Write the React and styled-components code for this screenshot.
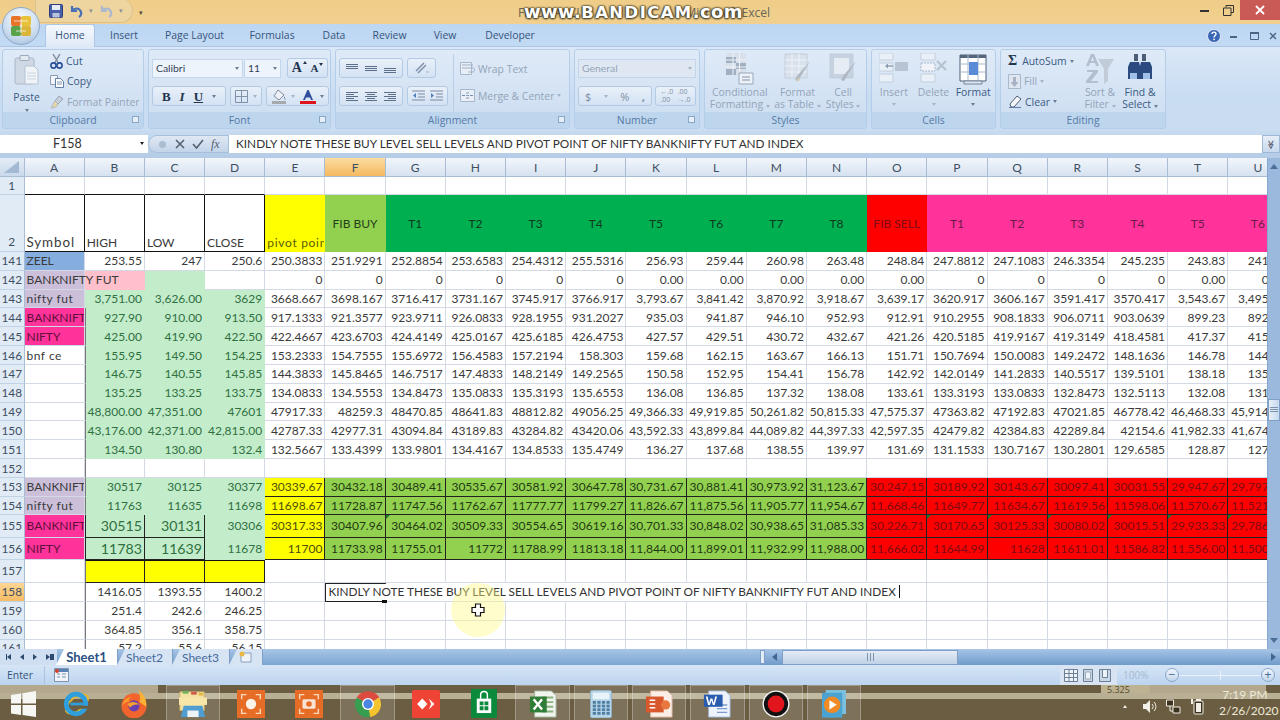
import React from "react";
import styled, { createGlobalStyle, css } from "styled-components";

const GlobalStyle = createGlobalStyle`
  html, body { margin: 0; padding: 0; background: #fff; }
  body { font-family: "Open Sans", "Liberation Sans", sans-serif; }
  * { box-sizing: border-box; }
`;

const Window = styled.div`
  position: relative;
  width: 1280px;
  height: 720px;
  overflow: hidden;
  display: flex;
  flex-direction: column;
`;

/* title bar */
const TitleBar = styled.div`
  position: relative;
  flex: 0 0 24px;
  display: flex;
  align-items: center;
  padding-left: 35px;
  background: linear-gradient(#efcd88, #f1d08f);
`;
const QuickAccess = styled.div`
  width: 98px;
  height: 24px;
  margin-top: -2px;
  padding-left: 13px;
  display: flex;
  align-items: center;
  gap: 6px;
  border: 1px solid #dcc08e;
  border-top: 0;
  border-radius: 0 14px 14px 0;
  background: #eed49e;
`;
const Tiny = styled.span`
  font-size: 7px;
  color: ${(p) => p.$color || "#8a8f99"};
  margin-left: ${(p) => p.$ml || 0}px;
  line-height: 1;
`;
const DocTitle = styled.div`
  position: absolute;
  left: 518px;
  top: 4px;
  width: 252px;
  display: flex;
  justify-content: space-between;
  font-size: 12px;
  color: #6a6658;
`;
const Watermark = styled.div`
  position: absolute;
  left: 524px;
  top: 1px;
  display: flex;
  align-items: baseline;
  font-family: "DejaVu Sans", sans-serif;
  font-weight: 700;
  color: #fff;
  text-shadow: 0 0 2px #4a4128, 0 1px 2px #4a4128, 1px 0 2px #4a4128, -1px 0 2px #4a4128;
`;
const WmSmall = styled.span`
  font-size: 18px;
  letter-spacing: 0.4px;
`;
const WmBig = styled.span`
  font-size: 16.5px;
  letter-spacing: 1.4px;
`;
const WinControls = styled.div`
  margin-left: auto;
  height: 20px;
  align-self: flex-start;
  display: flex;
  align-items: center;
`;
const WinBtn = styled.div`
  width: ${(p) => p.$w}px;
  height: 20px;
  display: flex;
  align-items: center;
  justify-content: center;
  background: ${(p) => p.$bg || "transparent"};
`;
const OfficeButton = styled.div`
  position: absolute;
  left: 2px;
  top: 7px;
  width: 38px;
  height: 38px;
  border-radius: 50%;
  display: flex;
  align-items: center;
  justify-content: center;
  background: radial-gradient(circle at 50% 30%, #f6f9fd 0%, #cfdff1 55%, #9db9d9 100%);
  border: 1px solid #8ea9c7;
  z-index: 3;
`;

/* tabs */
const TabStrip = styled.div`
  flex: 0 0 22px;
  display: flex;
  align-items: flex-end;
  padding-left: 45px;
  background: linear-gradient(#bcd6f3, #c3daf3);
  border-bottom: 1px solid #a9c6e6;
`;
const Tab = styled.div`
  height: ${(p) => (p.$active ? "23px" : "20px")};
  width: ${(p) => p.$w}px;
  display: flex;
  align-items: center;
  justify-content: center;
  padding-bottom: 2px;
  font-size: 10.4px;
  color: #35557d;
  ${(p) =>
    p.$active &&
    css`
      margin-bottom: -1px;
      background: linear-gradient(#f4f8fd, #dfeaf7);
      border: 1px solid #a9c6e6;
      border-bottom: 0;
      border-radius: 3px 3px 0 0;
    `}
`;
const TabTools = styled.div`
  margin-left: auto;
  height: 20px;
  display: flex;
  align-items: center;
`;

/* ribbon */
const Ribbon = styled.div`
  flex: 0 0 84px;
  display: flex;
  align-items: flex-start;
  gap: 4px;
  padding: 2px 0 0 2px;
  background: linear-gradient(#dbe8f7, #c8dcf2 60%, #c9dcf1);
`;
const Group = styled.div`
  width: ${(p) => p.$w}px;
  height: 80px;
  display: flex;
  flex-direction: column;
  border: 1px solid #b4cde9;
  border-radius: 3px;
  background: linear-gradient(#dfeaf7, #cbddf1);
`;
const GroupBody = styled.div`
  flex: 1;
  display: flex;
  padding: ${(p) => p.$pad || "0 3px"};
  min-height: 0;
`;
const GroupLabel = styled.div`
  position: relative;
  flex: 0 0 16px;
  display: flex;
  align-items: center;
  justify-content: center;
  padding-bottom: 1px;
  font-size: 10.4px;
  color: #557aa5;
  background: #bed5ee;
`;
const Launcher = styled.span`
  position: absolute;
  right: 4px;
  top: 4px;
  width: 7px;
  height: 7px;
  border: 1px solid #8aa6c6;
  background: #e6eef8;
`;
const PasteCol = styled.div`
  width: 47px;
  display: flex;
  flex-direction: column;
  align-items: center;
  padding-top: 5px;
`;
const LargeText = styled.div`
  font-size: 10.4px;
  line-height: 12px;
  text-align: center;
  white-space: nowrap;
  color: ${(p) => (p.$off ? "#93a4b8" : "#3a5a82")};
`;
const SmallCol = styled.div`
  display: flex;
  flex-direction: column;
  padding-top: ${(p) => p.$top || 1}px;
  gap: ${(p) => p.$gap || 0}px;
  width: ${(p) => p.$w || "auto"};
`;
const SmallBtn = styled.div`
  height: 21px;
  display: flex;
  align-items: center;
  gap: 3px;
  font-size: 10.4px;
  white-space: nowrap;
  color: ${(p) => (p.$off ? "#93a4b8" : "#3a5a82")};
`;
const SumLabel = styled.span`
  margin-left: 2px;
`;
const ToolRows = styled.div`
  flex: ${(p) => (p.$fixed ? "none" : 1)};
  display: flex;
  flex-direction: column;
  gap: 8px;
  padding-top: 8px;
`;
const ToolRow = styled.div`
  display: flex;
  gap: ${(p) => p.$gap ?? 4}px;
  height: 20px;
  align-items: center;
`;
const ComboBox = styled.div`
  width: ${(p) => p.$w}px;
  height: 19px;
  display: flex;
  align-items: center;
  justify-content: space-between;
  padding: 0 3px;
  font-size: 10.4px;
  color: ${(p) => (p.$off ? "#93a4b8" : "#33425a")};
  background: ${(p) => (p.$off ? "#dfe8f2" : "#eef4fb")};
  border: 1px solid #c3d5ea;
  font-family: "Lato", sans-serif;
`;
const ToolBox = styled.div`
  width: ${(p) => p.$w}px;
  height: 20px;
  margin-left: ${(p) => p.$ml || 0}px;
  padding: ${(p) => (p.$spread ? "0 6px" : 0)};
  display: flex;
  align-items: center;
  justify-content: ${(p) => (p.$spread ? "space-between" : "space-evenly")};
  font-size: ${(p) => p.$font || 11}px;
  line-height: ${(p) => (p.$font ? "8px" : "normal")};
  color: ${(p) => p.$color || "#445a78"};
  border: 1px solid #b3cae4;
  border-radius: 3px;
  background: linear-gradient(#e9f0f9, #d3e2f3);
`;
const GlyphBtn = styled.span`
  font-family: "Liberation Serif", serif;
  font-weight: ${(p) => p.$weight || 700};
  font-style: ${(p) => (p.$italic ? "italic" : "normal")};
  font-size: ${(p) => p.$size || 13}px;
  text-decoration: ${(p) => (p.$under ? "underline" : "none")};
  color: ${(p) => p.$color || "#24344d"};
  line-height: 1;
`;
const SizeGlyph = styled.span`
  display: flex;
  align-items: flex-start;
  gap: 1px;
`;
const Caret = styled.span`
  display: inline-block;
  width: 0;
  height: 0;
  border-left: 2.5px solid transparent;
  border-right: 2.5px solid transparent;
  border-top: 3px solid ${(p) => p.$color || "#6d7f96"};
  margin: ${(p) => p.$m || "0"};
  transform: ${(p) => (p.$up ? "rotate(180deg)" : "none")};
`;
const Divider = styled.div`
  width: 1px;
  height: 62px;
  margin: 4px 6px 0 5px;
  background: #b9cfe7;
`;
const LargeBtn = styled.div`
  width: ${(p) => p.$w}px;
  display: flex;
  flex-direction: column;
  align-items: center;
  padding-top: 3px;
`;
const IconSlot = styled.div`
  height: ${(p) => p.$h || 33}px;
  display: flex;
  align-items: flex-start;
  justify-content: center;
`;

/* formula bar */
const FormulaBar = styled.div`
  flex: 0 0 27px;
  display: flex;
  padding: 4px 0 5px;
  background: linear-gradient(#c7daf0, #b4cce6);
`;
const NameBox = styled.div`
  width: 148px;
  display: flex;
  align-items: center;
  justify-content: space-between;
  padding: 0 4px 2px 53px;
  font-size: 12.5px;
  font-family: "Lato", sans-serif;
  color: #333;
  background: #fff;
`;
const FxPill = styled.div`
  width: 81px;
  display: flex;
  align-items: center;
  gap: 7px;
  padding-left: 10px;
  color: #55606e;
  background: linear-gradient(#dfe8f3, #c2d4e9);
  border: 1px solid #a8c0dc;
  border-radius: 10px 0 0 10px;
`;
const FxDot = styled.span`
  width: 7px;
  height: 7px;
  border-radius: 50%;
  background: #a9bcd2;
  margin-right: 2px;
`;
const FormulaInput = styled.div`
  flex: 1;
  display: flex;
  align-items: center;
  padding: 0 0 2px 7px;
  font-family: "Lato", sans-serif;
  font-size: 11.8px;
  color: #333;
  white-space: nowrap;
  background: #fff;
`;
const FormulaExpand = styled.div`
  width: 18px;
  display: flex;
  align-items: center;
  justify-content: center;
  font-size: 9px;
  color: #445;
  background: linear-gradient(#e6eef8, #c8d9ed);
  border: 1px solid #9fb8d6;
  span {
    transform: rotate(90deg);
  }
`;

/* sheet */
const SheetArea = styled.div`
  position: relative;
  flex: 0 0 491px;
  display: flex;
`;
const GridClip = styled.div`
  flex: 0 0 1267px;
  overflow: hidden;
  font-family: "Lato", sans-serif;
  font-size: 12px;
  color: #3a3a3a;
  background: #fff;
`;
const Row = styled.div`
  display: grid;
  grid-template-columns: 24.5px repeat(21, 60.2px);
  height: ${(p) => p.$h}px;
`;
const ColHead = styled.div`
  display: flex;
  align-items: center;
  justify-content: center;
  font-size: 12px;
  color: #3f4f63;
  border-right: 1px solid #a9bcd3;
  border-bottom: 1px solid #a9bcd3;
  background: ${(p) =>
    p.$active
      ? "linear-gradient(#fbdca0, #f6b95e)"
      : "linear-gradient(#f2f6fb, #d6e2f0)"};
`;
const CornerHead = styled(ColHead)`
  padding: 3px;
  background: linear-gradient(#e4ecf6, #c9d9ec);
`;
const RowHead = styled.div`
  display: flex;
  align-items: ${(p) => (p.$tall ? "flex-end" : "center")};
  justify-content: center;
  padding-bottom: ${(p) => (p.$tall ? "2px" : 0)};
  font-size: 11.8px;
  color: #3f4f63;
  border-right: 1px solid #a9bcd3;
  border-bottom: 1px solid #c3d3e6;
  background: ${(p) => (p.$active ? "linear-gradient(#fbd795, #f6bc65)" : "#e1ebf6")};
`;
const Cell = styled.div`
  position: relative;
  display: flex;
  align-items: ${(p) => (p.$bottom ? "flex-end" : "center")};
  justify-content: ${(p) =>
    p.$align === "left" ? "flex-start" : p.$align === "center" ? "center" : "flex-end"};
  padding: ${(p) => (p.$bottom ? "0 2px 1px" : "0 2px")};
  white-space: nowrap;
  overflow: ${(p) => (p.$spill ? "visible" : "hidden")};
  z-index: ${(p) => (p.$spill ? 1 : 0)};
  font-size: ${(p) => p.$size || 12}px;
  letter-spacing: ${(p) => p.$ls || 0}px;
  color: ${(p) => p.$color || "#3a3a3a"};
  background: ${(p) => p.$fill || "#fff"};
  grid-column: ${(p) => (p.$span ? `span ${p.$span}` : "auto")};
  border-right: 1px solid ${(p) => p.$edge || "#d3dae6"};
  border-bottom: 1px solid ${(p) => p.$floor || p.$edge || "#d3dae6"};
  border-top: ${(p) => (p.$top ? "1px solid #111" : "0")};
  border-left: ${(p) => (p.$lead ? `1px solid ${p.$lead}` : "0")};
  ${(p) =>
    p.$tick &&
    css`
      &::before {
        content: "";
        position: absolute;
        left: 0;
        top: 0;
        border-top: 4px solid #1f7a2d;
        border-right: 4px solid transparent;
      }
    `}
`;
const ActiveCell = styled.div`
  position: absolute;
  left: 0;
  top: 0;
  width: 61px;
  height: 19px;
  border: 1.5px solid #222;
  border-right: 0;
`;
const FillHandle = styled.span`
  position: absolute;
  left: 57px;
  top: 17px;
  width: 5px;
  height: 3px;
  background: #111;
`;
const EditText = styled.span`
  padding-left: 1px;
  font-size: 11.8px;
  color: #333;
`;
const Caretbar = styled.span`
  display: inline-block;
  width: 1px;
  height: 13px;
  margin-left: 3px;
  background: #111;
  vertical-align: -2px;
`;
const VScroll = styled.div`
  flex: 1;
  display: flex;
  flex-direction: column;
  align-items: stretch;
  background: #9ab9dc;
  border-left: 1px solid #86a8cf;
`;
const ScrollEnd = styled.div`
  height: 17px;
  display: flex;
  align-items: center;
  justify-content: center;
  margin-top: ${(p) => (p.$low ? "auto" : 0)};
`;
const Arrow = styled.span`
  width: 0;
  height: 0;
  border-left: 4px solid transparent;
  border-right: 4px solid transparent;
  ${(p) => (p.$down ? "border-top" : "border-bottom")}: 5px solid #4c6f99;
`;
const VThumb = styled.div`
  height: 22px;
  margin-top: 224px;
  display: flex;
  align-items: center;
  justify-content: center;
  background: linear-gradient(90deg, #e8f0f9, #c7d9ed);
  border: 1px solid #7f9fc6;
`;
const Highlight = styled.div`
  position: absolute;
  left: 451px;
  top: 425px;
  width: 54px;
  height: 54px;
  border-radius: 50%;
  display: flex;
  align-items: center;
  justify-content: center;
  background: rgba(255, 250, 130, 0.42);
  z-index: 5;
`;

/* sheet tabs row */
const SheetTabs = styled.div`
  flex: 0 0 16px;
  display: flex;
  align-items: stretch;
  background: linear-gradient(#a8c5e6, #6f9bcc);
`;
const TabNav = styled.div`
  width: 57px;
  display: flex;
  align-items: center;
  justify-content: space-around;
  padding: 0 3px;
  background: #cfdff1;
`;
const NavArrow = styled.span`
  width: 0;
  height: 0;
  border-top: 3px solid transparent;
  border-bottom: 3px solid transparent;
  ${(p) => (p.$right ? "border-left" : "border-right")}: 4px solid #2d4a6e;
  ${(p) =>
    p.$stop &&
    css`
      outline: 0;
      box-shadow: ${p.$right ? "4px" : "-1px"} 0 0 0 #2d4a6e;
    `}
`;
const SheetTab = styled.div`
  width: ${(p) => p.$w}px;
  margin-left: -1px;
  display: flex;
  align-items: center;
  justify-content: center;
  font-family: "Lato", sans-serif;
  font-size: ${(p) => (p.$active ? 13 : 12)}px;
  font-weight: ${(p) => (p.$active ? 700 : 400)};
  color: ${(p) => (p.$active ? "#2a5186" : "#47699a")};
  background: ${(p) => (p.$active ? "#fff" : "#d6e4f4")};
  clip-path: polygon(8px 0, 100% 0, 100% 100%, 0 100%);
  border-right: 1px solid #7f9fc6;
`;
const TabsGap = styled.div`
  flex: 0 0 497px;
  background: linear-gradient(#a8c5e6, #7ca5d3);
`;
const HScroll = styled.div`
  flex: 1;
  display: flex;
  align-items: center;
`;
const Splitter = styled.span`
  width: 5px;
  height: 14px;
  margin-right: 7px;
  background: #e3edf8;
  border: 1px solid #7f9fc6;
`;
const ArrowSide = styled.span`
  width: 0;
  height: 0;
  border-top: 4px solid transparent;
  border-bottom: 4px solid transparent;
  ${(p) => (p.$right ? "border-left" : "border-right")}: 5px solid #43668f;
  ${(p) => (p.$right ? "margin: 0 4px 0 auto" : "margin-right: 5px")};
`;
const HThumb = styled.div`
  width: 176px;
  height: 15px;
  display: flex;
  align-items: center;
  justify-content: center;
  background: linear-gradient(#e4ecf6, #bfd1e6);
  border: 1px solid #7f9fc6;
`;

/* status bar */
const StatusBar = styled.div`
  flex: 0 0 20px;
  display: flex;
  align-items: center;
  padding-left: 7px;
  font-size: 10.4px;
  color: #35557d;
  background: linear-gradient(#d6e5f6, #bcd4ef);
`;
const StatusSep = styled.span`
  width: 1px;
  height: 18px;
  margin: 0 9px 0 11px;
  background: #a9c3e0;
`;
const ViewButtons = styled.div`
  margin-left: auto;
  height: 20px;
  display: flex;
  align-items: center;
  gap: 3px;
  padding: 0 4px;
  background: #d8e4f1;
  width: 57px;
`;
const ZoomArea = styled.div`
  width: 163px;
  display: flex;
  align-items: center;
  padding-left: 6px;
`;
const ZoomPct = styled.span`
  width: 42px;
  color: #a7bad0;
  font-size: 10px;
`;
const ZoomRound = styled.span`
  width: 14px;
  height: 14px;
  flex: none;
  border-radius: 50%;
  display: flex;
  align-items: center;
  justify-content: center;
  font-size: 12px;
  line-height: 1;
  color: #4b6a90;
  background: linear-gradient(#f1f6fc, #c2d5ea);
  border: 1px solid #89a7ca;
`;
const ZoomTrack = styled.span`
  position: relative;
  width: 82px;
  height: 1px;
  background: #e9f1fa;
  &::after {
    content: "";
    position: absolute;
    left: 50%;
    top: -4px;
    width: 1px;
    height: 9px;
    background: #e9f1fa;
  }
`;

/* taskbar */
const Taskbar = styled.div`
  position: relative;
  flex: 1;
  display: flex;
  align-items: stretch;
  background: linear-gradient(transparent 8px, #b9af95 8px, #b9af95 14px, transparent 14px), #6a5d41;
`;
const StripPiece = styled.div`
  position: absolute;
  top: 0;
  left: ${(p) => p.$l}px;
  width: ${(p) => p.$w}px;
  height: 8px;
  background: ${(p) => p.$bg};
  color: #554a30;
  font-size: 9px;
  line-height: 9px;
  overflow: hidden;
  padding-left: ${(p) => p.$pad || 0}px;
`;
const StartBtn = styled.div`
  position: relative;
  width: 47px;
  display: flex;
  align-items: center;
  justify-content: center;
  padding-top: 3px;
`;
const TaskItem = styled.div`
  position: relative;
  width: 58.3px;
  display: flex;
  align-items: center;
  justify-content: center;
  padding-top: 2px;
  ${(p) =>
    p.$open &&
    css`
      background: rgba(255, 255, 255, 0.13);
      border: 1px solid rgba(255, 255, 255, 0.28);
      border-bottom: 0;
      margin: 0 2px;
      width: 54.3px;
    `}
`;
const Tray = styled.div`
  position: relative;
  margin-left: auto;
  display: flex;
  align-items: center;
  gap: 9px;
  padding-top: 8px;
`;
const Clock = styled.div`
  width: 52px;
  margin: -8px 9px 0 6px;
  white-space: nowrap;
  text-align: center;
  font-size: 12px;
  line-height: 16px;
  color: #eee8d8;
  font-family: "Lato", sans-serif;
`;

/* drawn icons */
const PlainSvg = styled.svg`
  display: block;
  flex: none;
`;
const Svg = ({ w, h, children, vb, show }) => (
  <PlainSvg width={show || w} height={show ? (show * h) / w : h} viewBox={vb || `0 0 ${w} ${h}`}>
    {children}
  </PlainSvg>
);
const Lines = ({ ys, c = "#5b6f88" }) => (
  <Svg w={14} h={12}>
    {ys.map((l, i) => (
      <rect key={i} x={l[0]} y={l[1]} width={l[2]} height="1" fill={c} />
    ))}
  </Svg>
);
const Grip = ({ vertical }) =>
  vertical ? (
    <Svg w={8} h={6}><path d="M0 .5h8M0 2.500h8M0 4.500h8" stroke="#7b92ad" /></Svg>
  ) : (
    <Svg w={7} h={8}><path d="M.5 0v8M3.500 0v8M6.500 0v8" stroke="#7b92ad" /></Svg>
  );
const SaveIcon = () => (
  <Svg w={14} h={14}>
    <rect x="0.5" y="0.5" width="13" height="13" rx="1" fill="#4a5fa8" stroke="#2d3c7a" />
    <rect x="3" y="1" width="8" height="5" fill="#e6ecf7" />
    <rect x="3.5" y="9" width="7" height="4.5" fill="#b8c4dc" />
  </Svg>
);
const UndoIcon = ({ c }) => (
  <Svg w={14} h={14}>
    <path d="M3 2v5h5M3 7c2-3 7-4 9 1 .6 2-.4 4-2 5" fill="none" stroke={c} strokeWidth="2.2" />
  </Svg>
);
const OfficeLogo = () => (
  <Svg w={26} h={26}>
    <rect x="3" y="3" width="10" height="10" rx="2" fill="#e8742a" />
    <rect x="13" y="3" width="10" height="10" rx="2" fill="#e9c23b" />
    <rect x="3" y="13" width="10" height="10" rx="2" fill="#5ba34a" />
    <rect x="13" y="13" width="10" height="10" rx="2" fill="#d9b53a" />
    <path d="M6 8h14M8 18h10M13 6v14" stroke="#fff" strokeWidth="1.2" opacity=".7" />
  </Svg>
);
const ClipboardIcon = () => (
  <Svg w={25} h={31}>
    <rect x="1" y="3" width="19" height="26" rx="2" fill="#cfd9e6" stroke="#aab8c9" />
    <rect x="6" y="0.5" width="9" height="5" rx="1" fill="#e3e9f1" stroke="#9aa9bb" />
    <path d="M11 11h9l4 4v14H11z" fill="#f0f4f9" stroke="#b7c3d2" />
    <path d="M13 18h9M13 21h9M13 24h9" stroke="#cdd6e2" />
  </Svg>
);
const ScissorsIcon = () => (
  <Svg w={13} h={15}>
    <path d="M3 0l6 10M10 0L4 10" stroke="#7f8a9a" strokeWidth="1.4" fill="none" />
    <circle cx="3.5" cy="11.5" r="2.6" fill="none" stroke="#2c4f99" strokeWidth="1.6" />
    <circle cx="9.5" cy="11.5" r="2.6" fill="none" stroke="#2c4f99" strokeWidth="1.6" />
  </Svg>
);
const CopyIcon = () => (
  <Svg w={14} h={13}>
    <path d="M.5.5h7v9h-7z" fill="#f2f5fa" stroke="#8b9db5" />
    <path d="M5.5 3.5h5l3 3v6h-8z" fill="#fff" stroke="#5f7ea8" />
    <path d="M7 7h5M7 9h5" stroke="#7b96ba" />
  </Svg>
);
const BrushIcon = () => (
  <Svg w={14} h={14}>
    <path d="M9 1l4 3-5 5-3-3z" fill="#c7ced8" stroke="#9aa6b6" />
    <path d="M5 6l3 3c-1 3-4 4-7 4 2-2 2-5 4-7z" fill="#e6d9a6" stroke="#aeb6c2" />
  </Svg>
);
const BorderIcon = () => (
  <Svg w={13} h={13}>
    <path d="M.5.5h12v12H.5zM6.5.5v12M.5 6.5h12" fill="none" stroke="#7f92aa" />
  </Svg>
);
const BucketIcon = () => (
  <Svg w={16} h={15}>
    <path d="M7 1l6 5-5 5-5-4z" fill="#eef2f7" stroke="#7d8a9b" />
    <path d="M13 7c1 1.500 2 3 1 4-1-.5-1-3-1-4z" fill="#8090a5" />
    <rect x="1" y="12" width="14" height="3" fill="#a7a9ad" />
  </Svg>
);
const ColorA = () => (
  <Svg w={16} h={15}>
    <path d="M3 11L7.300 1h1.400L13 11h-2L10 8.500H6L5 11z" fill="#2e4f9c" />
    <rect x="0" y="12" width="16" height="3" fill="#e0141c" />
  </Svg>
);
const OrientIcon = () => (
  <Svg w={16} h={14}>
    <path d="M2 10l8-8M4 12l8-8" stroke="#7a8ba3" strokeWidth="1.4" />
    <path d="M12 11l3 0" stroke="#a5b4c7" />
  </Svg>
);
const IndentIcon = ({ flip }) => (
  <Svg w={13} h={12}>
    <path d="M0 1h13M6 4h7M6 7h7M0 10h13" stroke="#7a8ba3" />
    <path d={flip ? "M4 3v5L1 5.500z" : "M1 3v5l3-2.500z"} fill="#4f7fbd" />
  </Svg>
);
const WrapIcon = () => (
  <Svg w={15} h={13}>
    <path d="M.5.5h11v12H.5z" fill="#e9eff7" stroke="#a8b7ca" />
    <path d="M2 3h11M2 6h11c2 0 2 4 0 4H8" stroke="#9fb0c5" fill="none" />
  </Svg>
);
const MergeIcon = () => (
  <Svg w={15} h={13}>
    <path d="M.5.5h14v12H.5z" fill="#e9eff7" stroke="#a8b7ca" />
    <path d="M2 6.500h3M10 6.500h3" stroke="#6f8fb8" />
    <path d="M6 4h3M6 6.500h3M6 9h3" stroke="#8a9cb3" />
  </Svg>
);
const CondIcon = () => (
  <Svg w={28} h={32}>
    <path d="M0 0h20v22H0z" fill="#d7e0eb" />
    <path d="M0 4h10v6H0zM10 10h10v6H10zM0 16h10v6H0z" fill="#a0afc2" />
    <path d="M7 0v22M13.500 0v22M0 7h20M0 14h20" stroke="#eef2f7" />
    <path d="M13 20h14v11H13z" fill="#eef2f7" stroke="#97a7bb" />
    <path d="M16 24h8M16 27h8" stroke="#7e92aa" />
  </Svg>
);
const TableIcon = () => (
  <Svg w={28} h={30}>
    <path d="M2 1h22v24H2z" fill="#d8e1ec" stroke="#c1cddb" />
    <path d="M9 1v24M16 1v24M2 7h22M2 13h22M2 19h22" stroke="#eef2f7" />
    <path d="M27 8L15 28l-3-1 2-4z" fill="#aeb8c4" />
    <path d="M15 24l-2 5 4-2z" fill="#d6ccae" />
  </Svg>
);
const StyleIcon = () => (
  <Svg w={28} h={30}>
    <path d="M1 1h23v24H1z" fill="#c6d2e0" stroke="#c1cddb" />
    <path d="M5 5h15v16H5z" fill="#e6ecf4" />
    <path d="M27 8L15 28l-3-1 2-4z" fill="#aeb8c4" />
  </Svg>
);
const InsertIcon = () => (
  <Svg w={30} h={30}>
    <path d="M0 0h14v7H0zM0 21h14v8H0z" fill="#eaf0f7" stroke="#c3cfdd" />
    <path d="M0 10h14v8H0z" fill="#eaf0f7" stroke="#c3cfdd" />
    <path d="M16 9h13v9H16z" fill="#b8c4d4" />
    <path d="M14 13h-6" stroke="#8a9bb0" strokeWidth="1.400" />
    <path d="M6 13l3-2.500v5z" fill="#8a9bb0" />
  </Svg>
);
const DeleteIcon = () => (
  <Svg w={30} h={30}>
    <path d="M2 0h14v7H2zM2 21h14v8H2z" fill="#eaf0f7" stroke="#c3cfdd" />
    <path d="M2 10h14v8H2z" fill="#f0f4f9" stroke="#aab8c9" strokeDasharray="2 1" />
    <path d="M18 8l9 9M27 8l-9 9" stroke="#b6c1ce" strokeWidth="2" />
  </Svg>
);
const FormatIcon = () => (
  <Svg w={30} h={32}>
    <path d="M2 2h26v26H2z" fill="#fff" stroke="#4c5f78" />
    <path d="M2 2h26v3H2z" fill="#54657c" />
    <path d="M10 2v26M20 2v26M2 11h26M2 19h26" stroke="#a9b8ca" />
    <path d="M11 9h9v13h-9z" fill="#5b8bd6" />
    <path d="M6 28h18v3H6z" fill="#dfe6ef" stroke="#75869c" />
  </Svg>
);
const FillIcon = () => (
  <Svg w={13} h={15}>
    <path d="M.5.5h12v14H.5z" fill="#dfe6ef" stroke="#a9b8ca" />
    <path d="M5 3h3v5h2.500L6.500 13 2.500 8H5z" fill="#a5b3c5" />
  </Svg>
);
const EraserIcon = () => (
  <Svg w={14} h={13}>
    <path d="M2 9l7-8 4 3-7 8H3z" fill="#f4f6f9" stroke="#4c5f78" />
    <path d="M1 12.500h12" stroke="#5b7ba5" />
  </Svg>
);
const SortIcon = () => (
  <Svg w={28} h={32}>
    <path d="M5 1h3l5 12h-3l-1-3H4l-1 3H0zM5 8h3L6.500 4z" fill="#b3bfce" />
    <path d="M1 17h11v2L5 28h7v2H0v-2l7-9H1z" fill="#b3bfce" />
    <path d="M12 6h16l-6 10v12l-4 3V16z" fill="#c2ccd9" />
  </Svg>
);
const BinocularsIcon = () => (
  <Svg w={26} h={30}>
    <path d="M7 1h4v7H7zM15 1h4v7h-4z" fill="#4d5d75" />
    <path d="M3 9h9l1 4v13H1V14z" fill="#2d4a80" />
    <path d="M14 9h9l2 5v12H13V13z" fill="#2d4a80" />
    <rect x="3" y="20" width="7" height="6" fill="#9fc0e8" />
    <rect x="16" y="20" width="7" height="6" fill="#9fc0e8" />
  </Svg>
);
const CursorCross = () => (
  <Svg w={14} h={14}>
    <path d="M4.500 1h5v3.500H13v5H9.500V13h-5V9.500H1v-5h3.500z" fill="#fff" stroke="#111" strokeWidth="1.200" />
  </Svg>
);
const MacroIcon = () => (
  <Svg w={15} h={14}>
    <path d="M.5.5h14v13H.5z" fill="#f2f6fb" stroke="#7f94ad" />
    <path d="M1 1h13v3H1z" fill="#5b82b5" />
    <path d="M3 6h3M8 6h4M3 9h3M8 9h4" stroke="#7890ad" />
    <circle cx="3" cy="3" r="2" fill="#d8452c" />
  </Svg>
);
const WinLogo = () => (
  <Svg w={27} h={26}>
    <path d="M1 4l10-1.500v10H1zM12.500 2.200L26 0v12.500H12.500zM1 14h10v10L1 22.500zM12.500 14H26v12l-13.500-2z" fill="#f6f6f4" />
  </Svg>
);
const IeLogo = () => (
  <Svg w={30} h={30} show={28}>
    <ellipse cx="16" cy="15" rx="14" ry="7" fill="none" stroke="#e3b52c" strokeWidth="2" transform="rotate(-38 16 15)" />
    <circle cx="15" cy="15" r="10.500" fill="none" stroke="#2e9edc" strokeWidth="5" />
    <rect x="9" y="13.500" width="14" height="3" fill="#2e9edc" />
    <rect x="19" y="17" width="9" height="3" fill="#6a5d41" />
  </Svg>
);
const FirefoxLogo = () => (
  <Svg w={30} h={32} show={28}>
    <circle cx="15" cy="18" r="13.500" fill="#f2642d" />
    <path d="M20 1c6 5 9 11 8 18l-7-5c1-5 0-9-1-13z" fill="#f9b233" />
    <path d="M2 18c2-7 6-9 10-10-2 2-3 3-2 5-5 1-6 3-8 5z" fill="#f79b2a" />
    <circle cx="15" cy="18" r="6" fill="#6a3fb0" />
    <path d="M8 16c4-3 9-3 13 1-4-1-8 0-10 3z" fill="#f6a12c" />
  </Svg>
);
const FolderLogo = () => (
  <Svg w={30} h={29} show={28}>
    <path d="M1 2h26v20H1z" fill="#f3e3a3" stroke="#c9b26b" />
    <path d="M4 1h6v3H4z" fill="#6fb35a" />
    <path d="M13 2h6v3h-6z" fill="#d2594a" />
    <path d="M21 3h5v3h-5z" fill="#e8b942" />
    <path d="M0 8h30v8H0z" fill="#f6e7a8" />
    <path d="M5 17h20l3 12H2z" fill="#4f9dd1" />
    <path d="M9 22h12v7H9z" fill="#eef3f7" />
  </Svg>
);
const RecSquare = ({ camera }) => (
  <Svg w={30} h={30} show={28}>
    <rect width="30" height="30" fill="#e76c26" />
    <path d="M5 10V5h5M20 5h5v5M5 20v5h5M25 20v5h-5" stroke="#f9d9bf" strokeWidth="1.500" fill="none" />
    {camera ? (
      <g>
        <rect x="8" y="10" width="14" height="10" rx="1.500" fill="#f9e4d3" />
        <circle cx="15" cy="15" r="3" fill="#e76c26" />
      </g>
    ) : (
      <circle cx="15" cy="15" r="5.500" fill="#fbf3ea" />
    )}
  </Svg>
);
const ChromeLogo = () => (
  <Svg w={30} h={30} show={28}>
    <path d="M15 15L3 8a14 14 0 0124 0z" fill="#dd4b3e" />
    <path d="M15 15L27 8a14 14 0 01-10 21z" fill="#f6c42f" />
    <path d="M15 15L17 29A14 14 0 013 8z" fill="#379d50" />
    <circle cx="15" cy="15" r="6.500" fill="#fff" />
    <circle cx="15" cy="15" r="5" fill="#4a86e0" />
  </Svg>
);
const AnyDeskLogo = () => (
  <Svg w={30} h={30} show={28}>
    <rect width="30" height="30" rx="2" fill="#ef4335" />
    <path d="M11 9l5.500 6-5.500 6-5.500-6z" fill="#fff" />
    <path d="M18 9l6 6-6 6 2.500-6z" fill="#fff" />
  </Svg>
);
const StoreLogo = () => (
  <Svg w={27} h={30} show={26}>
    <rect width="27" height="30" fill="#0b8a3b" />
    <path d="M6 10h15v15H6z" fill="#fff" />
    <path d="M10 10V6a3.500 3.500 0 017 0v4" fill="none" stroke="#fff" strokeWidth="1.500" />
    <path d="M9 13h4v4H9zM14 13h4v4h-4zM9 18h4v4H9zM14 18h4v4h-4z" fill="#0b8a3b" />
  </Svg>
);
const ExcelLogo = () => (
  <Svg w={30} h={30} show={28}>
    <path d="M6 1h18l5 5v23H6z" fill="#f1f5ee" stroke="#9db39a" />
    <path d="M14 8h12M14 13h12M14 18h12M14 23h12" stroke="#88b17f" strokeWidth="2" />
    <rect x="1" y="7" width="18" height="17" fill="#2f7d36" />
    <path d="M5 10l9 11M14 10l-9 11" stroke="#fff" strokeWidth="2.500" />
  </Svg>
);
const CalcLogo = () => (
  <Svg w={24} h={31} show={22}>
    <rect x="0.500" y="0.500" width="23" height="30" rx="2" fill="#b8d5e8" stroke="#8fb3cc" />
    <rect x="3" y="3" width="18" height="7" fill="#e9f3fa" />
    {[12, 16, 20, 24].map((y) =>
      [3, 8, 13, 18].map((x) => <rect key={`${x}${y}`} x={x} y={y} width="3.500" height="3" fill="#4e7ea3" />)
    )}
  </Svg>
);
const PptLogo = () => (
  <Svg w={30} h={30} show={28}>
    <path d="M6 1h18l5 5v23H6z" fill="#fbeee6" stroke="#e0b49c" />
    <rect x="1" y="7" width="19" height="17" fill="#d9582b" />
    <circle cx="22" cy="16" r="5" fill="#e8763f" />
    <path d="M5 11h6M5 15h6M5 19h6" stroke="#fff" strokeWidth="1.500" />
  </Svg>
);
const WordLogo = () => (
  <Svg w={30} h={30} show={28}>
    <path d="M6 1h18l5 5v23H6z" fill="#eef3fb" stroke="#9fb4d6" />
    <path d="M15 16h11M15 20h11M15 24h11" stroke="#7b9bd0" strokeWidth="1.500" />
    <rect x="1" y="5" width="20" height="13" fill="#2a5cae" />
    <path d="M3 7h2l1.500 7L8 9h2l1.500 5L13 7h2l-2.500 9h-2L9 11l-1.500 5h-2z" fill="#fff" />
  </Svg>
);
const RecordLogo = () => (
  <Svg w={30} h={30} show={28}>
    <circle cx="15" cy="15" r="14.500" fill="#f5f5f5" />
    <circle cx="15" cy="15" r="13" fill="#111" />
    <circle cx="15" cy="15" r="9" fill="#e0161c" />
  </Svg>
);
const MediaLogo = () => (
  <Svg w={26} h={30} show={24}>
    <rect x="4" y="0" width="22" height="26" fill="#7cc0de" />
    <rect x="0" y="3" width="22" height="27" fill="#4aa3d0" />
    <circle cx="11" cy="16" r="9" fill="#f08a24" />
    <path d="M8 11l8 5-8 5z" fill="#fff" />
  </Svg>
);
const SpeakerIcon = () => (
  <Svg w={15} h={15}>
    <path d="M1 5h3l4-4v13l-4-4H1z" fill="#f2efe6" />
    <path d="M10 5c1.500 1.500 1.500 3.500 0 5M12 3c2.500 2.500 2.500 6.500 0 9" stroke="#f2efe6" fill="none" />
  </Svg>
);
const NetIcon = () => (
  <Svg w={15} h={16}>
    <path d="M.5 1h7v6h-7zM7 8h7v6H7z" fill="#3b3320" stroke="#f2efe6" />
    <path d="M4 7v5h3" stroke="#f2efe6" fill="none" />
  </Svg>
);
const PowerIcon = () => (
  <Svg w={14} h={17}>
    <rect x="4" y="3" width="9" height="13" rx="1" fill="#3b3320" stroke="#f2efe6" />
    <rect x="6" y="5" width="5" height="9" fill="#f2efe6" />
    <path d="M2 1v5" stroke="#f2efe6" strokeWidth="2" />
    <path d="M6 1h5v2H6z" fill="#f2efe6" />
  </Svg>
);

/* data */
const letters = "ABCDEFGHIJKLMNOPQRSTU".split("");
const rowsData = [
  [141, "ZEEL", "253.55", "247", "250.6", "250.3833", "251.9291", "252.8854", "253.6583", "254.4312", "255.5316", "256.93", "259.44", "260.98", "263.48", "248.84", "247.8812", "247.1083", "246.3354", "245.235", "243.83", "241.32"],
  [142, "BANKNIFTY FUT", "", "", "", "0", "0", "0", "0", "0", "0", "0.00", "0.00", "0.00", "0.00", "0.00", "0", "0", "0", "0", "0.00", "0.00"],
  [143, "nifty fut", "3,751.00", "3,626.00", "3629", "3668.667", "3698.167", "3716.417", "3731.167", "3745.917", "3766.917", "3,793.67", "3,841.42", "3,870.92", "3,918.67", "3,639.17", "3620.917", "3606.167", "3591.417", "3570.417", "3,543.67", "3,495.92"],
  [144, "BANKNIFTY", "927.90", "910.00", "913.50", "917.1333", "921.3577", "923.9711", "926.0833", "928.1955", "931.2027", "935.03", "941.87", "946.10", "952.93", "912.91", "910.2955", "908.1833", "906.0711", "903.0639", "899.23", "892.40"],
  [145, "NIFTY", "425.00", "419.90", "422.50", "422.4667", "423.6703", "424.4149", "425.0167", "425.6185", "426.4753", "427.57", "429.51", "430.72", "432.67", "421.26", "420.5185", "419.9167", "419.3149", "418.4581", "417.37", "415.43"],
  [146, "bnf ce", "155.95", "149.50", "154.25", "153.2333", "154.7555", "155.6972", "156.4583", "157.2194", "158.303", "159.68", "162.15", "163.67", "166.13", "151.71", "150.7694", "150.0083", "149.2472", "148.1636", "146.78", "144.31"],
  [147, "", "146.75", "140.55", "145.85", "144.3833", "145.8465", "146.7517", "147.4833", "148.2149", "149.2565", "150.58", "152.95", "154.41", "156.78", "142.92", "142.0149", "141.2833", "140.5517", "139.5101", "138.18", "135.81"],
  [148, "", "135.25", "133.25", "133.75", "134.0833", "134.5553", "134.8473", "135.0833", "135.3193", "135.6553", "136.08", "136.85", "137.32", "138.08", "133.61", "133.3193", "133.0833", "132.8473", "132.5113", "132.08", "131.31"],
  [149, "", "48,800.00", "47,351.00", "47601", "47917.33", "48259.3", "48470.85", "48641.83", "48812.82", "49056.25", "49,366.33", "49,919.85", "50,261.82", "50,815.33", "47,575.37", "47363.82", "47192.83", "47021.85", "46778.42", "46,468.33", "45,914.81"],
  [150, "", "43,176.00", "42,371.00", "42,815.00", "42787.33", "42977.31", "43094.84", "43189.83", "43284.82", "43420.06", "43,592.33", "43,899.84", "44,089.82", "44,397.33", "42,597.35", "42479.82", "42384.83", "42289.84", "42154.6", "41,982.33", "41,674.82"],
  [151, "", "134.50", "130.80", "132.4", "132.5667", "133.4399", "133.9801", "134.4167", "134.8533", "135.4749", "136.27", "137.68", "138.55", "139.97", "131.69", "131.1533", "130.7167", "130.2801", "129.6585", "128.87", "127.46"],
  [152],
  [153, "BANKNIFTY", "30517", "30125", "30377", "30339.67", "30432.18", "30489.41", "30535.67", "30581.92", "30647.78", "30,731.67", "30,881.41", "30,973.92", "31,123.67", "30,247.15", "30189.92", "30143.67", "30097.41", "30031.55", "29,947.67", "29,797.92"],
  [154, "nifty fut", "11763", "11635", "11698", "11698.67", "11728.87", "11747.56", "11762.67", "11777.77", "11799.27", "11,826.67", "11,875.56", "11,905.77", "11,954.67", "11,668.46", "11649.77", "11634.67", "11619.56", "11598.06", "11,570.67", "11,521.77"],
  [155, "BANKNIFTY", "30515", "30131", "30306", "30317.33", "30407.96", "30464.02", "30509.33", "30554.65", "30619.16", "30,701.33", "30,848.02", "30,938.65", "31,085.33", "30,226.71", "30170.65", "30125.33", "30080.02", "30015.51", "29,933.33", "29,786.65"],
  [156, "NIFTY", "11783", "11639", "11678", "11700", "11733.98", "11755.01", "11772", "11788.99", "11813.18", "11,844.00", "11,899.01", "11,932.99", "11,988.00", "11,666.02", "11644.99", "11628", "11611.01", "11586.82", "11,556.00", "11,500.99"],
  [157],
  [158, "", "1416.05", "1393.55", "1400.2"],
  [159, "", "251.4", "242.6", "246.25"],
  [160, "", "364.85", "356.1", "358.75"],
  [161, "", "57.2", "55.6", "56.15"],
];
const rowHeights = { 154: 18, 155: 23, 156: 22, 157: 23, 161: 9 };
const rowH = (n) => rowHeights[n] || (n <= 152 ? 18.83 : 19);

const LAV = "#cbbfd9";
const HOT = "#ff3399";
const GREEN = "#c3eccb";
const LIME = "#92d050";
const RED_TEXT = "#7d0a14";
const formulaText = "KINDLY NOTE THESE BUY LEVEL SELL LEVELS AND PIVOT POINT OF NIFTY BANKNIFTY FUT AND INDEX";

function cellProps(n, c, value) {
  // c: 0 = column A
  const p = {};
  if (c === 0) {
    p.$align = "left";
    if (value && /[a-z]/.test(value)) p.$ls = 0.5;
    if (n === 141) p.$fill = "#85aede";
    if ([142, 143, 153, 154].includes(n)) p.$fill = LAV;
    if ([144, 145, 155, 156].includes(n)) {
      p.$fill = HOT;
      p.$color = "#5e0f3c";
    }
    if (n === 142) p.$spill = true;
  }
  if (c >= 1 && c <= 3) {
    const g = (n >= 143 && n <= 151) || (n >= 153 && n <= 156);
    if (g) {
      p.$fill = GREEN;
      p.$color = "#2f7040";
      p.$edge = GREEN;
    }
    if (n === 142) p.$fill = c === 1 ? "#ffc0cb" : c === 2 ? GREEN : "#fff";
    if (n === 142 && c < 3) p.$edge = p.$fill;
    if (n === 157) {
      p.$fill = "#ffff00";
      p.$edge = "#222";
      p.$top = true;
    }
    if ((n === 155 || n === 156) && c < 3) {
      p.$size = 14.2;
      p.$edge = "#222";
    }
    if (c === 1 && n >= 144) p.$lead = n === 155 || n === 156 ? "#222" : "#777";
  }
  if (n >= 153 && n <= 156) {
    if (c === 4) {
      p.$fill = "#ffff00";
      p.$color = "#4d4d08";
      p.$edge = "#222";
    }
    if (c >= 5 && c <= 13) {
      p.$fill = LIME;
      p.$color = "#1f3a12";
      p.$edge = "#222";
    }
    if (c >= 14) {
      p.$fill = "#ff0000";
      p.$color = RED_TEXT;
      p.$edge = "#222";
    }
    if (n === 155 && (c === 6 || c >= 15)) p.$tick = true;
  }
  return p;
}

const HeaderRows = () => (
  <>
    <Row $h={19}>
      <CornerHead>
        <Svg w={15} h={12}>
          <path d="M15 0v12H0z" fill="#a3b9d3" />
        </Svg>
      </CornerHead>
      {letters.map((l) => (
        <ColHead key={l} $active={l === "F"}>
          {l}
        </ColHead>
      ))}
    </Row>
    <Row $h={18}>
      <RowHead>1</RowHead>
      {letters.map((l) => (
        <Cell key={l} $floor={l < "E" ? "#111" : undefined} />
      ))}
    </Row>
    <Row $h={57}>
      <RowHead $tall>2</RowHead>
      <Cell $bottom $align="left" $edge="#111" $ls={0.9} $size={13.4}>Symbol</Cell>
      <Cell $bottom $align="left" $edge="#111">HIGH</Cell>
      <Cell $bottom $align="left" $edge="#111">LOW</Cell>
      <Cell $bottom $align="left" $edge="#111">CLOSE</Cell>
      <Cell $bottom $align="left" $fill="#ffff00" $edge="#ffff00" $color="#5a5a08" $ls={0.7}>pivot point</Cell>
      <Cell $align="center" $fill={LIME} $edge={LIME} $color="#24401a">FIB BUY</Cell>
      {["T1", "T2", "T3", "T4", "T5", "T6", "T7", "T8"].map((t) => (
        <Cell key={t} $align="center" $fill="#00b050" $edge="#00b050" $color="#0f3a1f">{t}</Cell>
      ))}
      <Cell $align="center" $fill="#ff0000" $edge="#ff0000" $color={RED_TEXT}>FIB SELL</Cell>
      {["T1", "T2", "T3", "T4", "T5", "T6"].map((t) => (
        <Cell key={t} $align="center" $fill={HOT} $edge={HOT} $color="#6d1a4a">{t}</Cell>
      ))}
    </Row>
  </>
);

const DataRow = ({ values }) => {
  const [n, ...cells] = values;
  return (
    <Row $h={rowH(n)}>
      <RowHead $active={n === 158}>{n}</RowHead>
      {letters.map((l, c) => {
        if (n === 158 && c === 5) {
          return (
            <Cell key={l} $span={10} $align="left" $spill>
              <ActiveCell />
              <FillHandle />
              <EditText>
                {formulaText}
                <Caretbar />
              </EditText>
            </Cell>
          );
        }
        if (n === 158 && c > 5 && c < 15) return null;
        return (
          <Cell key={l} {...cellProps(n, c, cells[c])}>
            {cells[c] || ""}
          </Cell>
        );
      })}
    </Row>
  );
};

const taskApps = [
  [<IeLogo key="ie" />, false],
  [<FirefoxLogo key="ff" />, false],
  [<FolderLogo key="fd" />, true],
  [<RecSquare key="r1" />, false],
  [<RecSquare key="r2" camera />, false],
  [<ChromeLogo key="ch" />, true],
  [<AnyDeskLogo key="ad" />, false],
  [<StoreLogo key="st" />, false],
  [<ExcelLogo key="xl" />, true],
  [<CalcLogo key="ca" />, true],
  [<PptLogo key="pp" />, true],
  [<WordLogo key="wd" />, true],
  [<RecordLogo key="rc" />, true],
  [<MediaLogo key="md" />, true],
];

export default function App() {
  return (
    <Window>
      <GlobalStyle />
      <TitleBar>
        <QuickAccess>
          <SaveIcon />
          <UndoIcon c="#4a6fb5" />
          <Tiny>▾</Tiny>
          <UndoIcon c="#aab9cd" />
          <Tiny>▾</Tiny>
        </QuickAccess>
        <Tiny $ml={6} $color="#4e4a3e">▾</Tiny>
        <DocTitle>
          <span>FIBONACCI</span>
          <span>Microsoft Excel</span>
        </DocTitle>
        <Watermark>
          <WmSmall>www.</WmSmall>
          <WmBig>BANDICAM</WmBig>
          <WmSmall>.com</WmSmall>
        </Watermark>
        <WinControls>
          <WinBtn $w={24}>
            <Svg w={9} h={3}><rect width="9" height="2" y="1" fill="#333" /></Svg>
          </WinBtn>
          <WinBtn $w={24}>
            <Svg w={11} h={11}>
              <path d="M3 2.500V.5h7.500v7H8M.5 3h7.500v7.500H.5z" fill="none" stroke="#333" />
            </Svg>
          </WinBtn>
          <WinBtn $w={40} $bg="#c95a55">
            <Svg w={10} h={10}><path d="M1 1l8 8M9 1l-8 8" stroke="#fff" strokeWidth="1.800" /></Svg>
          </WinBtn>
        </WinControls>
      </TitleBar>
      <OfficeButton>
        <OfficeLogo />
      </OfficeButton>

      <TabStrip>
        <Tab $active $w={50}>Home</Tab>
        <Tab $w={58}>Insert</Tab>
        <Tab $w={83}>Page Layout</Tab>
        <Tab $w={72}>Formulas</Tab>
        <Tab $w={52}>Data</Tab>
        <Tab $w={59}>Review</Tab>
        <Tab $w={52}>View</Tab>
        <Tab $w={78}>Developer</Tab>
        <TabTools>
          <WinBtn $w={20}>
            <Svg w={14} h={14}>
              <circle cx="7" cy="7" r="6.500" fill="#3b67b5" stroke="#dfe9f7" />
              <path d="M5 5c0-2.500 4-2.500 4 0 0 1.500-2 1.500-2 3.500" fill="none" stroke="#fff" strokeWidth="1.400" />
              <rect x="6.300" y="9.600" width="1.500" height="1.500" fill="#fff" />
            </Svg>
          </WinBtn>
          <WinBtn $w={19}><Svg w={7} h={3}><rect width="7" height="2" y="1" fill="#4b6384" /></Svg></WinBtn>
          <WinBtn $w={22}>
            <Svg w={9} h={8}><path d="M.5.5h8v7h-8z" fill="none" stroke="#4b6384" /><path d="M0 0h9v2H0z" fill="#4b6384" /></Svg>
          </WinBtn>
          <WinBtn $w={15}>
            <Svg w={8} h={8}><path d="M1 1l6 6M7 1L1 7" stroke="#4b6384" strokeWidth="1.400" /></Svg>
          </WinBtn>
        </TabTools>
      </TabStrip>

      <Ribbon>
        <Group $w={142}>
          <GroupBody $pad="0">
            <PasteCol>
              <IconSlot $h={36}><ClipboardIcon /></IconSlot>
              <LargeText>Paste</LargeText>
              <Caret $m="6px 0 0" />
            </PasteCol>
            <SmallCol>
              <SmallBtn><ScissorsIcon /> Cut</SmallBtn>
              <SmallBtn><CopyIcon /> Copy</SmallBtn>
              <SmallBtn $off><BrushIcon /> Format Painter</SmallBtn>
            </SmallCol>
          </GroupBody>
          <GroupLabel>Clipboard<Launcher /></GroupLabel>
        </Group>

        <Group $w={183}>
          <GroupBody>
            <ToolRows>
              <ToolRow $gap={1}>
                <ComboBox $w={91}>Calibri<Caret /></ComboBox>
                <ComboBox $w={37}>11<Caret /></ComboBox>
                <ToolBox $w={41} $ml={5}>
                  <SizeGlyph>
                    <GlyphBtn $size={14}>A</GlyphBtn>
                    <Caret $up $color="#24344d" />
                  </SizeGlyph>
                  <SizeGlyph>
                    <GlyphBtn $size={11}>A</GlyphBtn>
                    <Caret $color="#24344d" />
                  </SizeGlyph>
                </ToolBox>
              </ToolRow>
              <ToolRow>
                <ToolBox $w={74}>
                  <GlyphBtn>B</GlyphBtn>
                  <GlyphBtn $italic>I</GlyphBtn>
                  <GlyphBtn $under>U</GlyphBtn>
                  <Caret />
                </ToolBox>
                <ToolBox $w={32}><BorderIcon /><Caret $color="#a4b4c8" /></ToolBox>
                <ToolBox $w={63}>
                  <BucketIcon />
                  <Caret $color="#a4b4c8" />
                  <ColorA />
                  <Caret />
                </ToolBox>
              </ToolRow>
            </ToolRows>
          </GroupBody>
          <GroupLabel>Font<Launcher /></GroupLabel>
        </Group>

        <Group $w={235}>
          <GroupBody>
            <ToolRows $fixed>
              <ToolRow>
                <ToolBox $w={64}>
                  <Lines ys={[[1, 2, 12], [1, 4, 12], [1, 6, 12]]} />
                  <Lines ys={[[1, 4, 12], [1, 6, 12], [1, 8, 12]]} />
                  <Lines ys={[[1, 6, 12], [1, 8, 12], [1, 10, 12]]} />
                </ToolBox>
                <ToolBox $w={29}><OrientIcon /></ToolBox>
              </ToolRow>
              <ToolRow>
                <ToolBox $w={64}>
                  <Lines ys={[[1, 2, 12], [1, 4, 8], [1, 6, 12], [1, 8, 8], [1, 10, 12]]} />
                  <Lines ys={[[1, 2, 12], [3, 4, 8], [1, 6, 12], [3, 8, 8], [1, 10, 12]]} />
                  <Lines ys={[[1, 2, 12], [5, 4, 8], [1, 6, 12], [5, 8, 8], [1, 10, 12]]} />
                </ToolBox>
                <ToolBox $w={41}><IndentIcon flip /><IndentIcon /></ToolBox>
              </ToolRow>
            </ToolRows>
            <Divider />
            <SmallCol $top={8} $gap={6}>
              <SmallBtn $off><WrapIcon /> Wrap Text</SmallBtn>
              <SmallBtn $off><MergeIcon /> Merge &amp; Center <Caret $color="#a4b4c8" /></SmallBtn>
            </SmallCol>
          </GroupBody>
          <GroupLabel>Alignment<Launcher /></GroupLabel>
        </Group>

        <Group $w={126}>
          <GroupBody>
            <ToolRows>
              <ToolRow>
                <ComboBox $w={118} $off>General<Caret $color="#a4b4c8" /></ComboBox>
              </ToolRow>
              <ToolRow $gap={3}>
                <ToolBox $w={74} $spread $color="#7d8fa6">
                  <span>$</span>
                  <Caret $color="#a4b4c8" />
                  <span>%</span>
                  <b>,</b>
                </ToolBox>
                <ToolBox $w={41} $font={7} $color="#7d8fa6">
                  <span>←.0<br />.00</span>
                  <span>.00<br />→.0</span>
                </ToolBox>
              </ToolRow>
            </ToolRows>
          </GroupBody>
          <GroupLabel>Number<Launcher /></GroupLabel>
        </Group>

        <Group $w={163}>
          <GroupBody $pad="0 2px">
            <LargeBtn $w={66}>
              <IconSlot><CondIcon /></IconSlot>
              <LargeText $off>Conditional<br />Formatting <Caret $color="#a4b4c8" /></LargeText>
            </LargeBtn>
            <LargeBtn $w={50}>
              <IconSlot><TableIcon /></IconSlot>
              <LargeText $off>Format<br />as Table <Caret $color="#a4b4c8" /></LargeText>
            </LargeBtn>
            <LargeBtn $w={42}>
              <IconSlot><StyleIcon /></IconSlot>
              <LargeText $off>Cell<br />Styles <Caret $color="#a4b4c8" /></LargeText>
            </LargeBtn>
          </GroupBody>
          <GroupLabel>Styles</GroupLabel>
        </Group>

        <Group $w={125}>
          <GroupBody $pad="0 2px">
            <LargeBtn $w={40}>
              <IconSlot><InsertIcon /></IconSlot>
              <LargeText $off>Insert</LargeText>
              <Caret $color="#a4b4c8" $m="5px 0 0" />
            </LargeBtn>
            <LargeBtn $w={40}>
              <IconSlot><DeleteIcon /></IconSlot>
              <LargeText $off>Delete</LargeText>
              <Caret $color="#a4b4c8" $m="5px 0 0" />
            </LargeBtn>
            <LargeBtn $w={40}>
              <IconSlot><FormatIcon /></IconSlot>
              <LargeText>Format</LargeText>
              <Caret $m="5px 0 0" />
            </LargeBtn>
          </GroupBody>
          <GroupLabel>Cells</GroupLabel>
        </Group>

        <Group $w={166}>
          <GroupBody $pad="0 0 0 7px">
            <SmallCol $w="72px">
              <SmallBtn>
                <GlyphBtn $size={14}>Σ</GlyphBtn>
                <SumLabel>AutoSum</SumLabel> <Caret />
              </SmallBtn>
              <SmallBtn $off><FillIcon /> Fill <Caret $color="#a4b4c8" /></SmallBtn>
              <SmallBtn><EraserIcon /> Clear <Caret /></SmallBtn>
            </SmallCol>
            <LargeBtn $w={40}>
              <IconSlot><SortIcon /></IconSlot>
              <LargeText $off>Sort &amp;<br />Filter <Caret $color="#a4b4c8" /></LargeText>
            </LargeBtn>
            <LargeBtn $w={40}>
              <IconSlot><BinocularsIcon /></IconSlot>
              <LargeText>Find &amp;<br />Select <Caret /></LargeText>
            </LargeBtn>
          </GroupBody>
          <GroupLabel>Editing</GroupLabel>
        </Group>
      </Ribbon>

      <FormulaBar>
        <NameBox>F158<Caret $color="#222" /></NameBox>
        <FxPill>
          <FxDot />
          <Svg w={10} h={10}><path d="M1 1l8 8M9 1l-8 8" stroke="#55606e" strokeWidth="1.600" /></Svg>
          <Svg w={12} h={10}><path d="M1 5l3.500 4L11 1" stroke="#55606e" strokeWidth="1.600" fill="none" /></Svg>
          <GlyphBtn $italic $size={12} $weight={400} $color="#55606e">fx</GlyphBtn>
        </FxPill>
        <FormulaInput>{formulaText}</FormulaInput>
        <FormulaExpand><span>≫</span></FormulaExpand>
      </FormulaBar>

      <SheetArea>
        <GridClip>
          <HeaderRows />
          {rowsData.map((r) => (
            <DataRow key={r[0]} values={r} />
          ))}
        </GridClip>
        <VScroll>
          <ScrollEnd><Arrow /></ScrollEnd>
          <VThumb><Grip vertical /></VThumb>
          <ScrollEnd $low><Arrow $down /></ScrollEnd>
        </VScroll>
        <Highlight><CursorCross /></Highlight>
      </SheetArea>

      <SheetTabs>
        <TabNav>
          <NavArrow $stop />
          <NavArrow />
          <NavArrow $right />
          <NavArrow $right $stop />
        </TabNav>
        <SheetTab $active $w={62}>Sheet1</SheetTab>
        <SheetTab $w={56}>Sheet2</SheetTab>
        <SheetTab $w={58}>Sheet3</SheetTab>
        <SheetTab $w={34}>
          <Svg w={13} h={12}>
            <path d="M2 2h10v9H2z" fill="#eef3f9" stroke="#8aa0bb" />
            <circle cx="3" cy="3" r="2.500" fill="#e8b942" />
          </Svg>
        </SheetTab>
        <TabsGap />
        <HScroll>
          <Splitter />
          <ArrowSide />
          <HThumb><Grip /></HThumb>
          <ArrowSide $right />
        </HScroll>
      </SheetTabs>

      <StatusBar>
        <span>Enter</span>
        <StatusSep />
        <MacroIcon />
        <ViewButtons>
          <Svg w={14} h={13}><path d="M.5.5h13v12H.5zM5 .5v12M9.500.5v12M.5 4.500h13M.5 8.500h13" fill="#eef3f9" stroke="#6c7f97" /></Svg>
          <Svg w={14} h={13}><path d="M2.500.5h9v12h-9z" fill="#c9d6e6" stroke="#6c7f97" /><path d="M4.500 3h5v7h-5z" fill="#eef3f9" stroke="#9aaabd" /></Svg>
          <Svg w={14} h={13}><path d="M1.500.5h11v12h-11z" fill="#c9d6e6" stroke="#6c7f97" /><path d="M4.500.5h5v8h-5z" fill="#eef3f9" stroke="#6c7f97" /></Svg>
        </ViewButtons>
        <ZoomArea>
          <ZoomPct>100%</ZoomPct>
          <ZoomRound>−</ZoomRound>
          <ZoomTrack />
          <ZoomRound>+</ZoomRound>
        </ZoomArea>
      </StatusBar>

      <Taskbar>
        <StripPiece $l={0} $w={158} $bg="#b3a88e" />
        <StripPiece $l={1101} $w={49} $bg="#bdb291" $pad={6}>5,325</StripPiece>
        <StripPiece $l={1150} $w={116} $bg="#b3a88e" />
        <StartBtn><WinLogo /></StartBtn>
        {taskApps.map(([icon, open], i) => (
          <TaskItem key={i} $open={open}>{icon}</TaskItem>
        ))}
        <Tray>
          <Caret $color="#f2efe6" $m="0 6px 0 0" $up />
          <SpeakerIcon />
          <NetIcon />
          <PowerIcon />
          <Clock>7:19 PM<br />2/26/2020</Clock>
        </Tray>
      </Taskbar>
    </Window>
  );
}
